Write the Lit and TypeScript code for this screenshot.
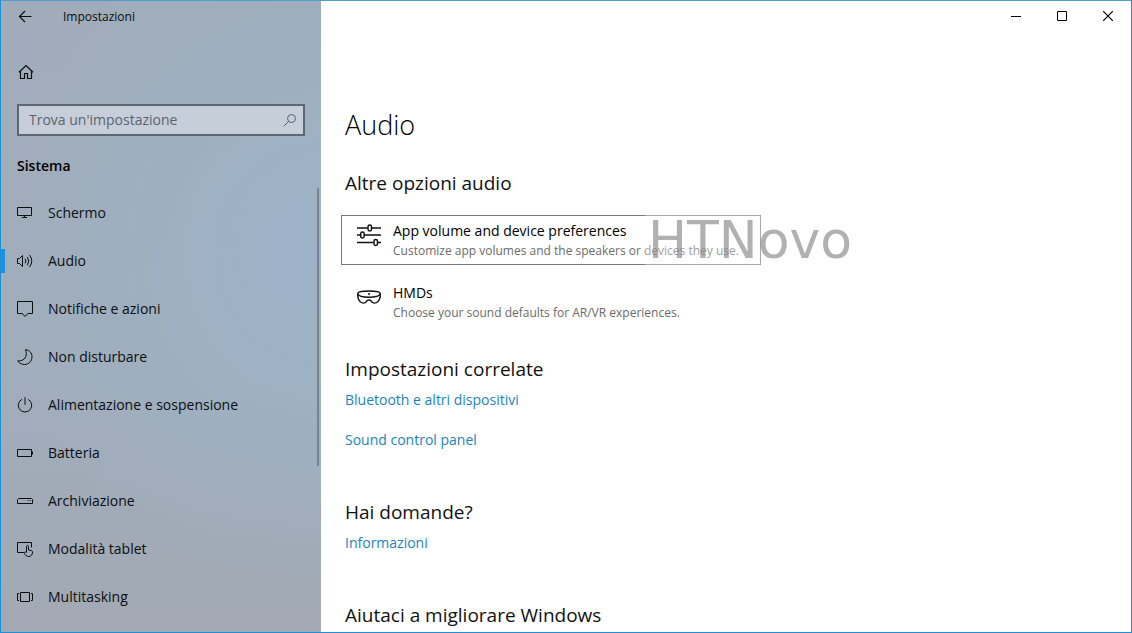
import { LitElement, html, svg, css, nothing } from "lit";
import type { TemplateResult } from "lit";
import { customElement, state } from "lit/decorators.js";
import { classMap } from "lit/directives/class-map.js";

interface NavItem {
  id: string;
  label: string;
  icon: TemplateResult;
}

const NAV: NavItem[] = [
  {
    id: "schermo",
    label: "Schermo",
    icon: svg`<path d="M.5 2.500h14v8H.5zM7.500 10.500v2M5 12.500h5"/>`,
  },
  {
    id: "audio",
    label: "Audio",
    icon: svg`<path d="M.5 5.500h2l3-3v11l-3-3h-2z"/><path d="M8 5.800q2 2.200 0 4.400M10.300 4q3 4 0 8M12.500 2q4.600 6 0 12"/>`,
  },
  {
    id: "notifiche",
    label: "Notifiche e azioni",
    icon: svg`<path d="M.5 .5h15v12H11l-3 2.800-3-2.800H.5z"/>`,
  },
  {
    id: "non-disturbare",
    label: "Non disturbare",
    icon: svg`<path d="M8.400 .7C12.500 .9 15 4 15 7.800c0 4.300-3.200 7.700-7.400 7.700-3 0-5.600-1.500-7-3.700C6 12.500 9.500 9 9.300 4.600 9.300 3 9 1.700 8.400.7z"/>`,
  },
  {
    id: "alimentazione",
    label: "Alimentazione e sospensione",
    icon: svg`<path d="M5 2.300A6.700 6.700 0 1 0 11 2.300M8 .3v7.500"/>`,
  },
  {
    id: "batteria",
    label: "Batteria",
    icon: svg`<path d="M.5 4.500h14v7H.5zM15.500 6.500v3"/>`,
  },
  {
    id: "archiviazione",
    label: "Archiviazione",
    icon: svg`<path d="M1.500 5.500h13l1 1v4H.5v-4z"/><path d="M10.500 7.500h1M12.700 7.500h1"/>`,
  },
  {
    id: "tablet",
    label: "Modalità tablet",
    icon: svg`<path d="M7 11.500H.5V1.500h14v5"/><path d="M9.500 11.500V5.500c0-1.500 2-1.500 2 0v3.500l2.500.5c.9.200 1.500.700 1.500 1.500 0 2.700-1.200 4.500-3.800 4.500-2 0-3.200-1-4.200-3-.6-1.300.8-2.200 2-1"/>`,
  },
  {
    id: "multitasking",
    label: "Multitasking",
    icon: svg`<path d="M3.500 3.500h9v9h-9zM2 4.500H.5v7H2M14 4.500h1.500v7H14"/>`,
  },
];

@customElement("settings-sidebar")
export class SettingsSidebar extends LitElement {
  @state() private current = "audio";

  static styles = css`
    :host {
      display: flex;
      flex-direction: column;
      min-height: 0;
      box-sizing: border-box;
      color: #0b0e12;
      background:
        radial-gradient(ellipse 320px 340px at 100% 40%, rgba(157, 180, 203, 0.85), rgba(157, 180, 203, 0)),
        linear-gradient(180deg, #a0acb9 0%, #a0adbb 60%, #a2a9b3 100%);
    }
    .titlebar {
      display: flex;
      align-items: center;
      height: 31px;
      flex: none;
      font-size: 12px;
    }
    button {
      border: 0;
      padding: 0;
      background: none;
      color: inherit;
      font: inherit;
      display: flex;
      align-items: center;
    }
    svg {
      display: block;
      fill: none;
      stroke: currentColor;
      flex: none;
    }
    .back {
      width: 46px;
      height: 30px;
      margin-right: 16px;
      padding-left: 17px;
    }
    .home {
      width: 48px;
      height: 48px;
      flex: none;
      margin-top: 16px;
      padding-left: 16px;
    }
    .search {
      display: flex;
      align-items: center;
      flex: none;
      height: 32px;
      margin: 8px 16px 0;
      box-sizing: border-box;
      border: 2px solid #5d6873;
      background: #c6ced9;
      color: #59626c;
    }
    .search input {
      flex: 1;
      min-width: 0;
      border: 0;
      outline: 0;
      padding: 0 0 0 10px;
      background: none;
      font: inherit;
      color: inherit;
    }
    .search input::placeholder {
      color: #5b646e;
      opacity: 1;
    }
    .search button {
      height: 28px;
      width: 24px;
      padding-left: 4px;
    }
    .category {
      margin: 20px 16px 0;
      flex: none;
      font-size: 14px;
      line-height: 20px;
      font-weight: 600;
      color: #000;
    }
    .scroller {
      flex: 1;
      min-height: 0;
      display: flex;
      margin-top: 12px;
      overflow: hidden;
    }
    ul {
      flex: 1;
      margin: 0;
      padding: 1px 0 0;
      list-style: none;
    }
    .item {
      width: 100%;
      height: 48px;
      text-align: left;
      border-left: 4px solid transparent;
      padding-left: 12px;
      gap: 15px;
      background: linear-gradient(#1a93e0, #1a93e0) no-repeat -4px center / 0 24px;
      background-origin: padding-box;
      background-clip: border-box;
    }
    .item.current {
      background-size: 4px 24px;
    }
    .thumb {
      width: 2px;
      height: 278px;
      margin-right: 2px;
      background: #79828f;
    }
  `;

  render() {
    return html`
      <div class="titlebar">
        <button class="back" aria-label="Indietro">
          <svg width="14" height="14" viewBox="0 0 14 14"><path d="M13.500 6.500H1.500M7 1L1.500 6.500 7 12" stroke-width="1.200" /></svg>
        </button>
        <span>Impostazioni</span>
      </div>
      <button class="home" aria-label="Pagina iniziale">
        <svg width="18" height="16" viewBox="0 0 18 16"><path d="M2 8.200L9 1.500l7 6.700M3.500 7v7.500h4V9.500h3v5h4V7" stroke-width="1.200" /></svg>
      </button>
      <div class="search">
        <input type="text" aria-label="Trova un'impostazione" placeholder="Trova un'impostazione" />
        <button aria-label="Cerca">
          <svg width="14" height="14" viewBox="0 0 14 14"><circle cx="8.500" cy="5.500" r="4" /><path d="M5.600 8.400L.7 13.300" /></svg>
        </button>
      </div>
      <div class="category">Sistema</div>
      <nav class="scroller">
        <ul>
          ${NAV.map(
            (n) => html`<li>
              <button
                class=${classMap({ item: true, current: n.id === this.current })}
                aria-current=${n.id === this.current ? "page" : nothing}
                @click=${() => (this.current = n.id)}
              >
                <svg width="16" height="16" viewBox="0 0 16 16">${n.icon}</svg>
                <span>${n.label}</span>
              </button>
            </li>`,
          )}
        </ul>
        <div class="thumb"></div>
      </nav>
    `;
  }
}

@customElement("audio-page")
export class AudioPage extends LitElement {
  static styles = css`
    :host {
      display: flex;
      flex-direction: column;
      min-width: 0;
      min-height: 0;
      overflow: hidden;
      background: #fff;
      color: #111;
    }
    .controls {
      display: flex;
      justify-content: flex-end;
      flex: none;
      height: 30px;
    }
    .controls button {
      width: 46px;
      border: 0;
      padding: 0;
      background: none;
      color: #000;
      display: grid;
      place-items: center;
    }
    svg {
      display: block;
      fill: none;
      stroke: currentColor;
      flex: none;
    }
    .content {
      padding: 76px 24px 0;
    }
    h1 {
      margin: 0 0 26px;
      font-size: 27px;
      line-height: 36px;
      font-weight: 300;
      color: #000;
    }
    h2 {
      margin: 0;
      font-size: 19px;
      line-height: 28px;
      font-weight: 400;
    }
    section {
      margin-bottom: 48px;
    }
    .options {
      display: flex;
      flex-direction: column;
      gap: 12px;
      max-width: 420px;
      margin: 18px 0 28px -4px;
      position: relative;
    }
    .option {
      display: flex;
      gap: 12px;
      height: 50px;
      box-sizing: border-box;
      padding: 5px 15px;
      border: 1px solid transparent;
      background: none;
      color: inherit;
      font: inherit;
      text-align: left;
      white-space: nowrap;
    }
    .option.focused {
      border-color: #7a7a7a;
    }
    .option svg {
      margin-top: 2px;
    }
    .name,
    .hint {
      display: block;
    }
    .name {
      line-height: 20px;
      color: #000;
    }
    .hint {
      font-size: 12px;
      line-height: 20px;
      color: #6b6b6b;
    }
    .watermark {
      position: absolute;
      left: 304px;
      top: 0;
      height: 50px;
      padding: 0 4px 0 3px;
      background: rgba(255, 255, 255, 0.35);
      color: rgba(125, 125, 125, 0.6);
      font: 52px/50px "DejaVu Sans", sans-serif;
      pointer-events: none;
    }
    a {
      display: table;
      margin-top: 20px;
      line-height: 20px;
      color: #1b84c0;
      text-decoration: none;
    }
    h2 + a {
      margin-top: 7px;
    }
  `;

  render() {
    return html`
      <div class="controls">
        <button aria-label="Riduci a icona"><svg width="10" height="10" viewBox="0 0 10 10"><path d="M0 5.500h10" /></svg></button>
        <button aria-label="Ingrandisci"><svg width="10" height="10" viewBox="0 0 10 10"><path d="M.5 .5h9v9h-9z" /></svg></button>
        <button aria-label="Chiudi"><svg width="10" height="10" viewBox="0 0 10 10"><path d="M0 0l10 10M10 0L0 10" stroke-width="1.200" /></svg></button>
      </div>
      <div class="content">
        <h1>Audio</h1>
        <h2>Altre opzioni audio</h2>
        <div class="options">
          <button class="option focused">
            <svg width="24" height="24" viewBox="0 0 24 24" stroke-width="1.500">
              <path d="M0 5h10.500M14.500 5H24M0 12h3.500M7.500 12H24M0 19.500h16.500M20.500 19.500H24" />
              <rect x="11" y="2" width="3.500" height="6" rx="1.700" />
              <rect x="3.700" y="9" width="3.500" height="6" rx="1.700" />
              <rect x="17" y="16.500" width="3.500" height="6" rx="1.700" />
            </svg>
            <span><span class="name">App volume and device preferences</span><span class="hint">Customize app volumes and the speakers or devices they use.</span></span>
          </button>
          <button class="option">
            <svg width="24" height="24" viewBox="0 0 24 24" stroke-width="1.500">
              <path d="M.8 8.500C1 5 23 5 23.200 8.500c.2 3-.5 6.800-2.700 8.500-1.800 1.300-4.500 1.300-5.800-.3-1.200-2.200-4.200-2.200-5.400 0-1.300 1.600-4 1.600-5.800.3C1.300 15.300.6 11.500.8 8.500z" />
              <path d="M.8 9c1.700 4.300 20.700 4.300 22.400 0M11 9h2" />
            </svg>
            <span><span class="name">HMDs</span><span class="hint">Choose your sound defaults for AR/VR experiences.</span></span>
          </button>
          <div class="watermark">HTNovo</div>
        </div>
        <section>
          <h2>Impostazioni correlate</h2>
          <a href="#bluetooth">Bluetooth e altri dispositivi</a>
          <a href="#sound">Sound control panel</a>
        </section>
        <section>
          <h2>Hai domande?</h2>
          <a href="#info">Informazioni</a>
        </section>
        <section>
          <h2>Aiutaci a migliorare Windows</h2>
        </section>
      </div>
    `;
  }
}

@customElement("app-root")
export class AppRoot extends LitElement {
  static styles = css`
    :host {
      display: grid;
      grid-template-columns: 320px 1fr;
      grid-template-rows: minmax(0, 1fr);
      height: 100vh;
      box-sizing: border-box;
      overflow: hidden;
      border: 1px solid #1d8fd8;
      border-top-color: #4f9fd2;
      font: 14px/20px "Open Sans", "Noto Sans", sans-serif;
    }
  `;

  render() {
    return html`<settings-sidebar></settings-sidebar><audio-page></audio-page>`;
  }
}
